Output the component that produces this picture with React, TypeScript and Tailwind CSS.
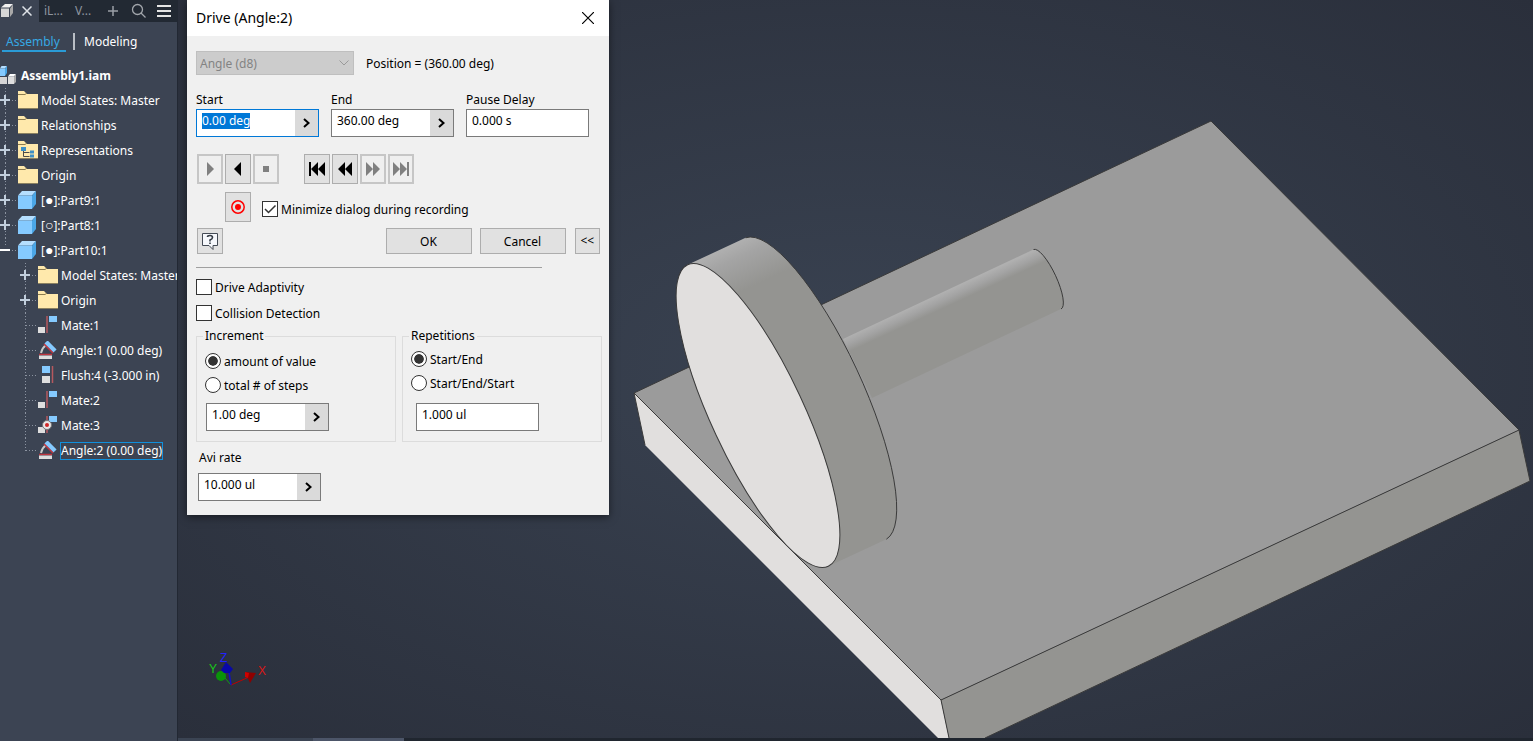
import { useEffect, useRef } from "react";
import type { ReactNode } from "react";

type TreeIcon = "folder" | "reps" | "part" | "mate" | "angle" | "flush" | "insert";
type TreeItem = {
  label: ReactNode;
  icon: TreeIcon;
  toggle?: "plus" | "minus";
  selected?: boolean;
};

const bullet = (mark: string) => <span className="text-[14px] leading-none">{mark}</span>;

const rootItems: TreeItem[] = [
  { label: "Model States: Master", icon: "folder", toggle: "plus" },
  { label: "Relationships", icon: "folder", toggle: "plus" },
  { label: "Representations", icon: "reps", toggle: "plus" },
  { label: "Origin", icon: "folder", toggle: "plus" },
  { label: <>[{bullet("●")}]:Part9:1</>, icon: "part", toggle: "plus" },
  { label: <>[{bullet("○")}]:Part8:1</>, icon: "part", toggle: "plus" },
  { label: <>[{bullet("●")}]:Part10:1</>, icon: "part", toggle: "minus" },
];

const childItems: TreeItem[] = [
  { label: "Model States: Master", icon: "folder", toggle: "plus" },
  { label: "Origin", icon: "folder", toggle: "plus" },
  { label: "Mate:1", icon: "mate" },
  { label: "Angle:1 (0.00 deg)", icon: "angle" },
  { label: "Flush:4 (-3.000 in)", icon: "flush" },
  { label: "Mate:2", icon: "mate" },
  { label: "Mate:3", icon: "insert" },
  { label: "Angle:2 (0.00 deg)", icon: "angle", selected: true },
];

function ItemIcon({ name }: { name: TreeIcon }) {
  return (
    <svg width="20" height="20" viewBox="0 1 20 20" className="shrink-0" aria-hidden="true">
      {(name === "folder" || name === "reps") && (
        <>
          <path d="M0 1h6l3 3h11v14H0z" fill="#ffe9ac" />
          <path d="M0 4.500h7l2-1.500" stroke="#8c7c50" fill="none" />
          <path d="M0 18.500h20" stroke="#8a8060" />
        </>
      )}
      {name === "reps" && (
        <>
          <path d="M5.500 9v7.500h6M5.500 12.500h6" stroke="#4b4b4b" fill="none" />
          <path d="M3 7h5v4H3zM12 10.500h4v3h-4zM12 14.500h4v3h-4z" fill="#3d8fc6" />
        </>
      )}
      {name === "part" && (
        <>
          <path d="M0 5.500 4 1h14l-4 4.500z" fill="#b5dfff" />
          <path d="M0 5.500h14V19H0z" fill="#85caff" />
          <path d="M14 5.500 18 1v13l-4 5z" fill="#4ba6e6" />
        </>
      )}
      {(name === "mate" || name === "insert") && (
        <>
          <path d="M11 1h8v6h-8z" fill="#85caff" />
          <path d="M0 12h7v6H0z" fill="#dedede" />
          <path d="M9 1v17" stroke="#b6585e" strokeWidth="1.500" />
        </>
      )}
      {name === "insert" && (
        <>
          <circle cx="9" cy="10" r="4.500" fill="#e8e8e8" stroke="#777" />
          <circle cx="9" cy="10" r="2" fill="#d02828" />
        </>
      )}
      {name === "angle" && (
        <>
          <path d="M3 13Q4 8 8 5" stroke="#c9c9c9" strokeWidth="2" fill="none" />
          <path d="m8 2 9 9" stroke="#85caff" strokeWidth="4.500" />
          <path d="m6 4 9 9" stroke="#c03640" strokeWidth="1.500" />
          <path d="M1 14.500h13" stroke="#c03640" strokeWidth="1.500" />
          <path d="M1 15.500h13v3.500H1z" fill="#dedede" />
        </>
      )}
      {name === "flush" && (
        <>
          <path d="M4 1h8v7H4z" fill="#85caff" />
          <path d="M4 11h8v7H4z" fill="#dedede" />
          <path d="M14.500 1v17" stroke="#b6585e" strokeWidth="1.500" />
        </>
      )}
    </svg>
  );
}

function TreeRow({ item, last }: { item: TreeItem; last: boolean }) {
  return (
    <div className="flex h-[25px] items-center">
      <svg width="18" height="25" viewBox="0 0 18 25" className="shrink-0" aria-hidden="true">
        <path d={last ? "M5.500 0v13" : "M5.500 0v25"} stroke="#8b93a0" strokeDasharray="1 2" />
        <path d="M6 12.500h10" stroke="#8b93a0" strokeDasharray="1 2" />
        {item.toggle && <path d="M0 7h11v11H0z" fill="#3c4453" />}
        {item.toggle === "plus" && <path d="M0 12h10M5 7v10" stroke="#c2cfdd" strokeWidth="2" />}
        {item.toggle === "minus" && <path d="M0 12h10" stroke="#fff" strokeWidth="2" />}
      </svg>
      <ItemIcon name={item.icon} />
      <span
        className={
          item.selected
            ? "ml-[2px] border border-[#1090dc] text-[12px] leading-4 whitespace-nowrap"
            : "ml-[3px] text-[12px] leading-4 whitespace-nowrap"
        }
      >
        {item.label}
      </span>
    </div>
  );
}

function Browser() {
  return (
    <aside className="flex w-[178px] shrink-0 flex-col overflow-hidden border-r border-[#222833] bg-[#3c4453] text-white">
      <div className="flex h-[22px] items-center bg-[#222933] text-[12px] text-[#8e959f]">
        <div className="flex h-full w-[39px] shrink-0 items-center gap-2 bg-[#3c4453]">
          <svg width="14" height="16" viewBox="0 0 14 16" aria-hidden="true">
            <path d="M1 5.500h8V14H1z" fill="#d6d6d6" />
            <path d="M1 4.500 5 1h8l-3.500 3.500z" fill="#f2f2f2" />
            <path d="m10 5.500 3-4V10l-3 4z" fill="#a9a9a9" />
          </svg>
          <button type="button" aria-label="Close panel">
            <svg width="10" height="10" viewBox="0 0 10 10">
              <path d="m.5.5 9 9m0-9-9 9" stroke="#dfe3e8" strokeWidth="1.500" />
            </svg>
          </button>
        </div>
        <button type="button" className="ml-[5px] w-[31px] text-left">iL...</button>
        <button type="button" className="w-8 text-left">V...</button>
        <button type="button" aria-label="Add panel">
          <svg width="12" height="12" viewBox="0 0 12 12">
            <path d="M1 6h10M6 1v10" stroke="#9a9fa6" strokeWidth="1.500" />
          </svg>
        </button>
        <button type="button" aria-label="Search" className="ml-3">
          <svg width="16" height="16" viewBox="0 0 16 16" fill="none" stroke="#a2a6ac" strokeWidth="1.300">
            <circle cx="6.500" cy="6.500" r="5" />
            <path d="m10 10 4.500 4.500" />
          </svg>
        </button>
        <button type="button" aria-label="Menu" className="ml-[10px]">
          <svg width="14" height="14" viewBox="0 0 14 14" stroke="#e4e4e4" strokeWidth="2">
            <path d="M0 2h14M0 7h14M0 12h14" />
          </svg>
        </button>
      </div>

      <div className="flex h-[39px] items-center text-[12px] leading-4">
        <button type="button" className="ml-[2px] w-16 border-b-2 border-[#2a9bd6] pt-[2px] pl-1 text-left text-[#36a9e4]">
          Assembly
        </button>
        <span className="ml-[7px] h-[17px] w-[2px] bg-[#b9bec5]" />
        <button type="button" className="ml-[9px]">Modeling</button>
      </div>

      <div className="flex flex-col pt-[2px]">
        <div className="flex h-[25px] items-center">
          <svg width="17" height="20" viewBox="0 0 17 20" className="shrink-0" aria-hidden="true">
            <path d="M0 2.500 1.500 0H7L5 2.500z" fill="#b5dfff" />
            <path d="m5 2.500 2-2.500v7L5 10z" fill="#4ba6e6" />
            <path d="M0 2.500h5V10H0z" fill="#85caff" />
            <path d="M0 11h7v7H0z" fill="#d5d5d5" />
            <path d="m8 10.500 2-2.500h6l-2 2.500z" fill="#fff" />
            <path d="M8 10.500h6V18H8z" fill="#dedede" />
            <path d="m14 10.500 2-2.500v8l-2 2z" fill="#aaa" />
          </svg>
          <span className="ml-[4px] text-[12px] font-bold">Assembly1.iam</span>
        </div>
        {rootItems.map((item, i) => (
          <TreeRow key={i} item={item} last={i === rootItems.length - 1} />
        ))}
        <div className="ml-5 flex flex-col">
          {childItems.map((item, i) => (
            <TreeRow key={i} item={item} last={i === childItems.length - 1} />
          ))}
        </div>
      </div>
    </aside>
  );
}

function Scene() {
  return (
    <svg
      className="absolute inset-0 h-full w-full"
      viewBox="178 0 1355 738"
      preserveAspectRatio="xMinYMin slice"
      role="img"
      aria-label="Assembly view"
    >
      <defs>
        <linearGradient id="rim" gradientUnits="userSpaceOnUse" x1="700" y1="256" x2="721" y2="301">
          <stop offset="0" stopColor="#b2b2b2" />
          <stop offset="0.350" stopColor="#a4a4a4" />
          <stop offset="1" stopColor="#949491" />
        </linearGradient>
        <linearGradient id="rod" gradientUnits="userSpaceOnUse" x1="940" y1="294" x2="946" y2="307">
          <stop offset="0" stopColor="#b0b0b0" />
          <stop offset="0.500" stopColor="#a3a3a3" />
          <stop offset="1" stopColor="#949491" />
        </linearGradient>
      </defs>

      <path d="M634 393 1211 121l308 309-578 270z" fill="#9b9b9b" />
      <path d="M634 393 941 700l8 38h-11L645 445z" fill="#e1dfde" />
      <path d="m941 700 578-270 11 51-545 257h-36z" fill="#949491" />
      <path
        d="M645 445 634 393 1211 121l308 309 11 51-545 257M634 393l307 307 8 38M941 700l578-270"
        fill="none"
        stroke="#3a3a3a"
      />

      <path d="m843 339 190.500-89.500A32.500 9 65 0 1 1061 309L872 398z" fill="url(#rod)" />
      <path d="M1033.500 249.500A32.500 9 65 0 1 1061 309" fill="none" stroke="#3a3a3a" />

      <path d="m687.600 264.800 58-27A166.400 46.300 65 0 1 886.400 539.200l-58 27z" fill="url(#rim)" />
      <path d="M745.600 237.800A166.400 46.300 65 0 1 886.400 539.200" fill="none" stroke="#3a3a3a" />
      <ellipse
        cx="758"
        cy="415.500"
        rx="166.400"
        ry="46.300"
        transform="rotate(65 758 415.500)"
        fill="#e1dfde"
        stroke="#3a3a3a"
      />

      <path d="M231 685 249 677" stroke="#c00000" />
      <path d="m245 672 11 1-6 10z" fill="#8e0000" />
      <path d="m245 672 4 1-1 5-3-1z" fill="#d00000" />
      <path d="m231 685-6-7" stroke="#10a010" />
      <circle cx="221" cy="676" r="5" fill="#0a930a" />
      <path d="m231 685-2-13" stroke="#1010c8" strokeWidth="1.500" />
      <path d="m226 662 7 7-3 4h-6l-3-3z" fill="#0808a8" />
      <g fontFamily="Liberation Sans, sans-serif" fontSize="12">
        <text x="220" y="662" fill="#2222ff">Z</text>
        <text x="209" y="673" fill="#18c818">Y</text>
        <text x="258" y="675" fill="#d81818">X</text>
      </g>
    </svg>
  );
}

function ValueField({
  id,
  label,
  name,
  value,
  arrow,
  active,
}: {
  id: string;
  label?: string;
  name: string;
  value: string;
  arrow?: boolean;
  active?: boolean;
}) {
  const ref = useRef<HTMLInputElement>(null);
  useEffect(() => {
    if (active) {
      ref.current?.focus();
      ref.current?.select();
    }
  }, [active]);
  return (
    <div className="flex w-[123px] flex-col">
      {label && (
        <label htmlFor={id} className="mb-px">
          {label}
        </label>
      )}
      <div className={active ? "flex h-7 border border-[#0078d7] bg-white" : "flex h-7 border border-[#7a7a7a] bg-white"}>
        <input
          ref={ref}
          id={id}
          aria-label={name}
          defaultValue={value}
          className="min-w-0 flex-1 pb-1 pl-[5px] leading-4 outline-none selection:bg-[#0078d7] selection:text-white"
        />
        {arrow && (
          <button type="button" aria-label={`${name} options`} className="flex w-[23px] items-center justify-center bg-[#dadada]">
            <svg width="8" height="10" viewBox="0 0 8 10" fill="none" stroke="#000" strokeWidth="2">
              <path d="m1 1 4.500 4L1 9" />
            </svg>
          </button>
        )}
      </div>
    </div>
  );
}

function ToolButton({ label, disabled, children }: { label: string; disabled?: boolean; children: ReactNode }) {
  return (
    <button
      type="button"
      aria-label={label}
      disabled={disabled}
      className="flex h-[30px] w-[26px] items-center justify-center border border-[#adadad] bg-[#e1e1e1] text-black disabled:border-2 disabled:border-[#c6c6c6] disabled:bg-[#efefef] disabled:text-[#808080]"
    >
      <svg width="20" height="16" viewBox="0 0 20 16" fill="currentColor" className="shrink-0">
        {children}
      </svg>
    </button>
  );
}

function CheckBox({ id, label, checked }: { id: string; label: string; checked?: boolean }) {
  return (
    <div className="flex h-4 items-center gap-[3px]">
      <span className="grid size-4">
        <input
          id={id}
          type="checkbox"
          defaultChecked={checked}
          className="peer col-start-1 row-start-1 size-4 appearance-none border border-[#333] bg-white"
        />
        <svg
          viewBox="0 0 16 16"
          className="pointer-events-none invisible col-start-1 row-start-1 size-4 peer-checked:visible"
          fill="none"
          stroke="#333"
          strokeWidth="1.500"
        >
          <path d="m3 8 3.500 3.500 7-7" />
        </svg>
      </span>
      <label htmlFor={id} className="pt-[2px]">{label}</label>
    </div>
  );
}

function Radio({ id, name, label, checked }: { id: string; name: string; label: string; checked?: boolean }) {
  return (
    <div className="flex h-4 items-center gap-[3px]">
      <input
        id={id}
        type="radio"
        name={name}
        defaultChecked={checked}
        className="size-4 appearance-none rounded-full border border-[#333] bg-white bg-clip-content p-[2px] not-checked:bg-clip-border checked:bg-[#333] checked:shadow-[inset_0_0_0_2px_white]"
      />
      <label htmlFor={id} className="pt-[2px]">{label}</label>
    </div>
  );
}

function DriveDialog() {
  const wide = "h-[26px] w-[86px] border border-[#adadad] bg-[#e1e1e1] pt-px";
  return (
    <section
      role="dialog"
      aria-labelledby="drive-title"
      className="relative ml-[9px] w-[422px] self-start bg-[#f0f0f0] text-[12px] leading-4 text-black shadow-[0_2px_8px_rgba(0,0,0,0.5)]"
    >
      <header className="flex h-9 items-center justify-between bg-white pr-[15px] pl-[9px]">
        <h1 id="drive-title" className="text-[14px]">Drive (Angle:2)</h1>
        <button type="button" aria-label="Close">
          <svg width="12" height="12" viewBox="0 0 12 12" stroke="#000" strokeWidth="1.200">
            <path d="m0 0 12 12M12 0 0 12" />
          </svg>
        </button>
      </header>

      <div className="flex flex-col px-[9px] pt-[15px] pb-[14px]">
        <div className="flex items-center gap-3">
          <div className="grid w-[158px] items-center">
            <select
              aria-label="Parameter"
              disabled
              className="col-start-1 row-start-1 h-6 appearance-none border border-[#bfbfbf] bg-[#cccccc] pt-px pl-[3px] text-[#838383] opacity-100"
            >
              <option>Angle (d8)</option>
            </select>
            <svg width="10" height="6" viewBox="0 0 10 6" fill="none" stroke="#9a9a9a" className="pointer-events-none col-start-1 row-start-1 mr-[5px] justify-self-end">
              <path d="m.5.5 4.500 4.500L9.500.5" />
            </svg>
          </div>
          <span className="pt-[2px]">Position = (360.00 deg)</span>
        </div>

        <div className="mt-[17px] flex gap-[12px]">
          <ValueField id="start" label="Start" name="Start" value="0.00 deg" arrow active />
          <ValueField id="end" label="End" name="End" value="360.00 deg" arrow />
          <ValueField id="pause" label="Pause Delay" name="Pause Delay" value="0.000 s" />
        </div>

        <div className="mt-[17px] ml-px flex gap-[25px]">
          <div className="flex gap-[2px]">
            <ToolButton label="Play forward" disabled><path d="m7 1 7 7-7 7z" /></ToolButton>
            <ToolButton label="Play reverse"><path d="m13 1-7 7 7 7z" /></ToolButton>
            <ToolButton label="Stop" disabled><path d="M7 5h6v6H7z" /></ToolButton>
          </div>
          <div className="flex gap-[2px]">
            <ToolButton label="Go to start"><path d="M2 1h2v14H2zM11 1 4 8l7 7zM18 1l-7 7 7 7z" /></ToolButton>
            <ToolButton label="Step back"><path d="M10 1 3 8l7 7zM17 1l-7 7 7 7z" /></ToolButton>
            <ToolButton label="Step forward" disabled><path d="m3 1 7 7-7 7zM10 1l7 7-7 7z" /></ToolButton>
            <ToolButton label="Go to end" disabled><path d="m2 1 7 7-7 7zM9 1l7 7-7 7zM16 1h2v14h-2z" /></ToolButton>
          </div>
        </div>

        <div className="mt-2 ml-[29px] flex items-center gap-[11px]">
          <ToolButton label="Record">
            <circle cx="10" cy="8" r="6.200" fill="none" stroke="#f00" strokeWidth="1.500" />
            <circle cx="10" cy="8" r="3" fill="#f00" />
          </ToolButton>
          <div className="pt-[3px]">
            <CheckBox id="minimize" label="Minimize dialog during recording" checked />
          </div>
        </div>

        <div className="mt-[6px] ml-px flex items-center">
          <button type="button" aria-label="Help" className="flex size-[26px] items-center justify-center border border-[#adadad] bg-[#e1e1e1]">
            <svg width="18" height="18" viewBox="0 0 18 18">
              <path d="M1.500 1.500h15v12H12v4l-4-4H1.500z" fill="#f6f8fc" stroke="#444b55" />
              <path d="M6.500 5q0-1.500 2.500-1.500T11.500 5.500Q11.500 7 9 8v1.500M9 10.500V12" fill="none" stroke="#333a44" strokeWidth="1.600" />
            </svg>
          </button>
          <div className="ml-[163px] flex gap-2">
            <button type="button" className={wide}>OK</button>
            <button type="button" className={wide}>Cancel</button>
          </div>
          <button type="button" aria-label="Less" className="ml-[9px] size-[26px] border border-[#adadad] bg-[#e1e1e1]">&lt;&lt;</button>
        </div>

        <hr className="mt-[13px] mr-[58px] border-0 border-t border-[#a0a0a0]" />

        <div className="mt-[11px] flex flex-col gap-[10px]">
          <CheckBox id="adaptivity" label="Drive Adaptivity" />
          <CheckBox id="collision" label="Collision Detection" />
        </div>

        <div className="mt-[7px] -mr-[2px] flex gap-[6px]">
          <fieldset className="h-[114px] w-[200px] border border-[#dcdcdc] px-2">
            <legend className="-ml-[2px] px-[2px]">Increment</legend>
            <div className="flex flex-col gap-2 pt-[9px]">
              <Radio id="amount" name="increment" label="amount of value" checked />
              <Radio id="steps" name="increment" label="total # of steps" />
            </div>
            <div className="mt-[10px] ml-px">
              <ValueField id="increment-value" name="Increment value" value="1.00 deg" arrow />
            </div>
          </fieldset>
          <fieldset className="h-[114px] w-[200px] border border-[#dcdcdc] px-2">
            <legend className="-ml-[2px] px-[2px]">Repetitions</legend>
            <div className="flex flex-col gap-2 pt-[7px]">
              <Radio id="start-end" name="repetitions" label="Start/End" checked />
              <Radio id="start-end-start" name="repetitions" label="Start/End/Start" />
            </div>
            <div className="mt-3 ml-[5px]">
              <ValueField id="repetition-count" name="Repetition count" value="1.000 ul" />
            </div>
          </fieldset>
        </div>

        <div className="mt-2 ml-[2px] flex flex-col gap-[7px]">
          <label htmlFor="avi" className="ml-px">Avi rate</label>
          <ValueField id="avi" name="Avi rate" value="10.000 ul" arrow />
        </div>
      </div>
    </section>
  );
}

export default function App() {
  return (
    <div className="flex min-h-screen bg-[#3c4453] font-['Noto_Sans',sans-serif]">
      <Browser />
      <main className="flex min-w-0 flex-1 flex-col bg-[#20262f]">
        <div className="relative flex flex-1 overflow-hidden bg-radial from-[#3a4352] to-[#2a2f3b]">
          <Scene />
          <DriveDialog />
        </div>
        <div className="flex h-[3px]">
          <div className="w-[135px] bg-[#3b4453]" />
          <div className="w-[91px] bg-[#4c5568]" />
        </div>
      </main>
    </div>
  );
}
